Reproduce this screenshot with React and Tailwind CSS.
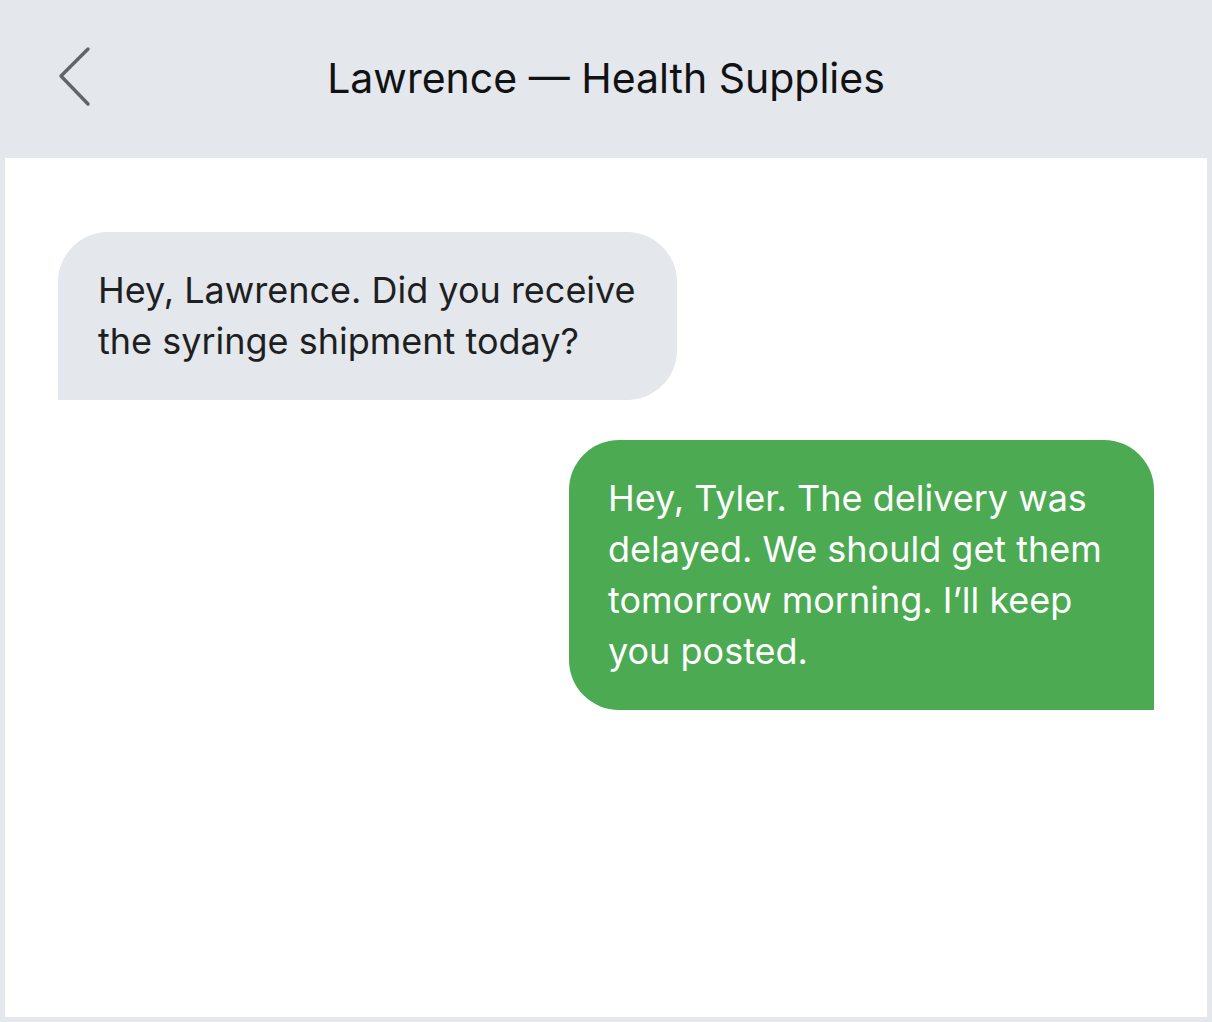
// Chat thread: header with back button, then the message bubbles.
export default function App() {
  return (
    <div
      className="flex h-[1022px] w-[1212px] flex-col bg-[#e4e7eb] px-[5px] pb-[5px] text-[#1d1f22]"
      style={{ fontFamily: 'Inter, "Noto Sans", sans-serif' }}
    >
      <header className="relative flex h-[158px] shrink-0 items-center justify-center">
        <button className="absolute left-[45px] top-[40px] text-[#60656b]">
          <svg width="50" height="75" viewBox="0 0 50 75" fill="none">
            <polyline
              points="38,9 11,36 38,64"
              stroke="currentColor"
              strokeWidth="3.4"
              strokeLinecap="round"
              strokeLinejoin="round"
            />
          </svg>
        </button>
        <h1 className="pb-px text-[41px] font-normal text-[#111214]">Lawrence — Health Supplies</h1>
      </header>

      <main className="flex flex-1 flex-col gap-10 bg-white px-[53px] pt-[74px]">
        <Bubble side="left">
          Hey, Lawrence. Did you receive
          <br />
          the syringe shipment today?
        </Bubble>
        <Bubble side="right">
          Hey, Tyler. The delivery was
          <br />
          delayed. We should get them
          <br />
          tomorrow morning. I’ll keep
          <br />
          you posted.
        </Bubble>
      </main>
    </div>
  )
}

function Bubble({ side, children }) {
  const mine = side === 'right'
  return (
    <div
      className={
        mine
          ? 'self-end w-[585px] rounded-[50px] rounded-br-none bg-[#4caa53] py-[33px] pl-[39px] pr-[30px] text-white'
          : 'self-start w-[619px] rounded-[50px] rounded-bl-none bg-[#e4e7eb] py-[33px] pl-[40px] pr-[30px]'
      }
    >
      <p className="whitespace-nowrap text-[36px] leading-[51px]">{children}</p>
    </div>
  )
}
